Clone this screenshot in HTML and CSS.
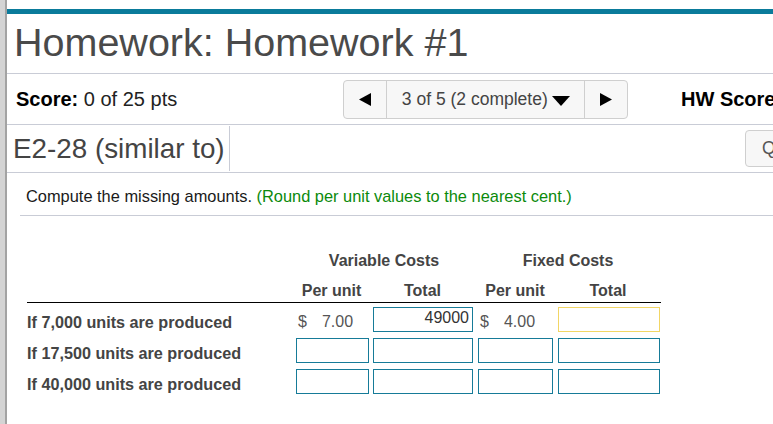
FILE: index.html
```html
<!DOCTYPE html>
<html lang="en">
<head>
    <meta charset="UTF-8">
    <title>Homework: Homework #1</title>
    <link rel="stylesheet" href="styles.css">
</head>
<body>
    <div class="page">
        <div class="sidebar"></div>
        <div class="main">
            <div class="topbar"></div>
            <h1 class="title">Homework: Homework #1</h1>

            <div class="score-row">
                <div class="score"><strong>Score:</strong> 0 of 25 pts</div>
                <div class="nav">
                    <div class="nav-btn">
                        <svg width="12" height="13" viewBox="0 0 12 13"><polygon points="12,0 12,13 0,6.5" fill="#000"/></svg>
                    </div>
                    <div class="nav-mid">
                        3 of 5 (2 complete)
                        <svg class="caret" width="18" height="10" viewBox="0 0 18 10"><polygon points="0,0 18,0 9,10" fill="#000"/></svg>
                    </div>
                    <div class="nav-btn">
                        <svg width="12" height="13" viewBox="0 0 12 13"><polygon points="0,0 12,6.5 0,13" fill="#000"/></svg>
                    </div>
                </div>
                <div class="hw-score">HW Score</div>
            </div>

            <div class="problem-row">
                <div class="problem-name">E2-28 (similar to)</div>
                <div class="q-btn">Q</div>
            </div>

            <div class="question">
                <p class="prompt">Compute the missing amounts. <span class="hint">(Round per unit values to the nearest cent.)</span></p>
            </div>

            <div class="cost-grid">
                <div class="cell"></div>
                <div class="cell head span2">Variable Costs</div>
                <div class="cell head span2">Fixed Costs</div>

                <div class="cell sub"></div>
                <div class="cell sub">Per unit</div>
                <div class="cell sub">Total</div>
                <div class="cell sub">Per unit</div>
                <div class="cell sub">Total</div>

                <div class="cell label">If 7,000 units are produced</div>
                <div class="cell value">$<span class="amt">7.00</span></div>
                <div class="cell"><div class="box w100 filled">49000</div></div>
                <div class="cell value">$<span class="amt">4.00</span></div>
                <div class="cell"><div class="box w102 active"></div></div>

                <div class="cell label">If 17,500 units are produced</div>
                <div class="cell"><div class="box w73"></div></div>
                <div class="cell"><div class="box w100"></div></div>
                <div class="cell"><div class="box w75"></div></div>
                <div class="cell"><div class="box w102"></div></div>

                <div class="cell label">If 40,000 units are produced</div>
                <div class="cell"><div class="box w73"></div></div>
                <div class="cell"><div class="box w100"></div></div>
                <div class="cell"><div class="box w75"></div></div>
                <div class="cell"><div class="box w102"></div></div>
            </div>
        </div>
    </div>
</body>
</html>
```

FILE: styles.css
```css
body {
    margin: 0;
    font-family: "Liberation Sans", Arial, sans-serif;
    background-color: white;
    overflow: hidden;
}

.page {
    display: flex;
    height: 424px;
}

.sidebar {
    width: 5px;
    flex-shrink: 0;
    background-color: #d4d4d4;
    border-right: 2px solid #a3a3a3;
}

.main {
    flex: 1;
    min-width: 0;
    padding-top: 9px;
    overflow: hidden;
}

.topbar {
    height: 5px;
    background-color: #0a7b9b;
}

.title {
    margin: 0;
    padding: 6px 0 9px 7px;
    font-size: 39.5px;
    line-height: 44px;
    font-weight: normal;
    color: #4a4a4a;
    border-bottom: 1px solid #c9ccd6;
}

.score-row {
    display: grid;
    grid-template-columns: 327px 285px 1fr;
    align-items: center;
    height: 50px;
    padding-left: 9px;
    border-bottom: 1px solid #c9ccd6;
}

.score {
    font-size: 20px;
    color: #222;
}

.score strong {
    color: #000;
}

.nav {
    display: flex;
    height: 39px;
    border: 1px solid #cfcfcf;
    border-radius: 4px;
    background-color: #f7f7f7;
    box-sizing: border-box;
}

.nav-btn {
    display: flex;
    align-items: center;
    justify-content: center;
    width: 42px;
}

.nav-mid {
    display: flex;
    align-items: center;
    width: 200px;
    padding-left: 15px;
    box-sizing: border-box;
    border-left: 1px solid #cfcfcf;
    border-right: 1px solid #cfcfcf;
    font-size: 17.5px;
    color: #444;
}

.caret {
    margin-left: 4px;
    margin-top: 3px;
}

.hw-score {
    padding-left: 53px;
    font-size: 20px;
    font-weight: bold;
    color: #000;
    white-space: nowrap;
}

.problem-row {
    display: flex;
    align-items: center;
    height: 47px;
    border-bottom: 1px solid #c9ccd6;
}

.problem-name {
    align-self: stretch;
    display: flex;
    align-items: center;
    width: 223px;
    margin: 1px 0;
    padding-left: 6px;
    box-sizing: border-box;
    border-right: 1px solid #c9ccd6;
    font-size: 27.8px;
    color: #444;
}

.q-btn {
    flex-shrink: 0;
    margin-left: auto;
    margin-right: -17px;
    width: 45px;
    height: 37px;
    padding-left: 16px;
    box-sizing: border-box;
    border: 1px solid #cfcfcf;
    border-radius: 4px;
    background-color: #f7f7f7;
    font-size: 17.5px;
    line-height: 35px;
    color: #555;
}

.question {
    margin-left: 13px;
}

.prompt {
    margin: 0;
    padding: 14px 0 9px 6px;
    font-size: 16.4px;
    line-height: 19px;
    color: #1a1a1a;
    border-bottom: 1px solid #c9ccd6;
}

.hint {
    color: #0b8a0b;
}

.cost-grid {
    display: grid;
    grid-template-columns: 266px 77px 105px 80px 106px;
    grid-template-rows: 31px 27px 31px 31px 31px;
    margin: 29px 0 0 20px;
    font-size: 16px;
    color: #444;
}

.cell {
    box-sizing: border-box;
}

.head {
    font-weight: bold;
    text-align: center;
    line-height: 31px;
}

.span2 {
    grid-column: span 2;
}

.sub {
    font-weight: bold;
    text-align: center;
    padding-top: 4px;
    line-height: 22px;
    border-bottom: 1px solid #000;
}

.label {
    font-weight: bold;
    padding-top: 7px;
    font-size: 16.2px;
    line-height: 25px;
    white-space: nowrap;
}

.value {
    padding: 6px 0 0 5px;
    line-height: 25px;
    color: #555;
}

.amt {
    margin-left: 15px;
}

.box {
    margin: 4px 0 0 3px;
    height: 25px;
    box-sizing: border-box;
    border: 1px solid #167b98;
    padding: 0 3px;
    text-align: right;
    line-height: 20px;
    color: #333;
}

.box.active {
    border-color: #f2d665;
}

.w73 { width: 73px; }
.w75 { width: 75px; }
.w100 { width: 100px; }
.w102 { width: 102px; }
```
